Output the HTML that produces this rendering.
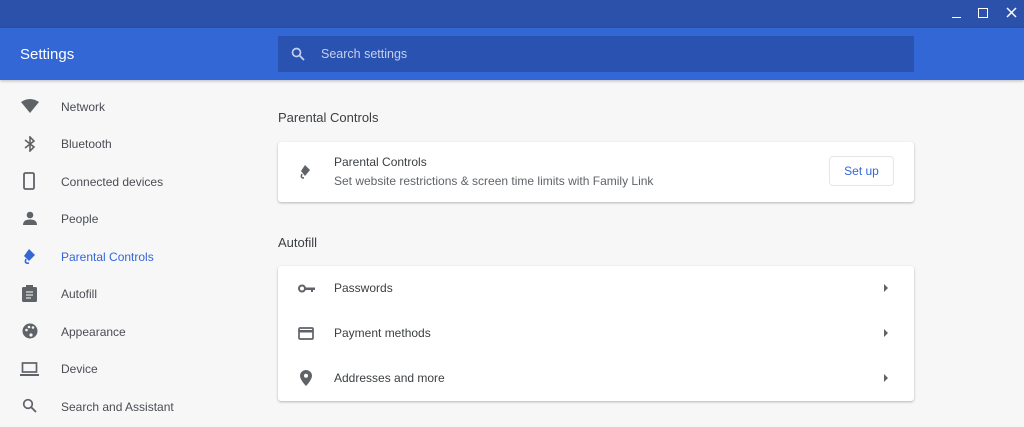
<!DOCTYPE html>
<html><head><style>
body{margin:0;width:1024px;height:427px;overflow:hidden;background:#f7f7f8;font-family:"Liberation Sans",sans-serif;position:relative}
.tb{position:absolute;left:0;top:0;width:1024px;height:28px;background:#2b51aa}
.hd{position:absolute;left:0;top:28px;width:1024px;height:52px;background:#3367d6;box-shadow:0 1px 3px rgba(0,0,0,.25)}
.hd .t{position:absolute;left:20px;top:18px;color:#fff;font-size:15px}
.sb{position:absolute;left:278px;top:8px;width:636px;height:36px;background:#2a52b0}
.sb span{position:absolute;left:43px;top:11px;color:#c5d0ee;font-size:12.5px}
.ni{position:absolute;left:61px;font-size:12px;color:#4a4d52}
.ic{position:absolute;left:21px}
.h{position:absolute;left:278px;font-size:13px;color:#3c4043}
.card{position:absolute;left:278px;width:636px;background:#fff;border-radius:3px;box-shadow:0 1px 2px rgba(0,0,0,.18),0 1px 3px rgba(0,0,0,.1)}
.rt{position:absolute;left:56px;font-size:12px;color:#3c4043}
.arr{position:absolute;left:606px;width:0;height:0;border-left:4px solid #5f6368;border-top:4px solid transparent;border-bottom:4px solid transparent}
</style></head><body>
<div class="tb">
<div style="position:absolute;left:952px;top:17px;width:9px;height:1px;background:#fff"></div>
<div style="position:absolute;left:978px;top:8px;width:8px;height:8px;border:1.5px solid #fff"></div>
<svg style="position:absolute;left:1006px;top:7px" width="11" height="11"><path d="M1 1L10 10M10 1L1 10" stroke="#fff" stroke-width="1.5"/></svg>
</div>
<div class="hd"><div class="t">Settings</div>
<div class="sb"><svg style="position:absolute;left:13px;top:11px" width="14" height="14"><circle cx="5.5" cy="5.5" r="4" fill="none" stroke="#c5d0ee" stroke-width="1.7"/><path d="M8.5 8.5L13 13" stroke="#c5d0ee" stroke-width="1.8"/></svg><span>Search settings</span></div></div>

<svg class="ic" style="top:99px" width="18" height="14"><path d="M0 3Q9 -3 18 3L9 14Z" fill="#5f6368"/></svg>
<div class="ni" style="top:100px">Network</div>
<svg class="ic" style="top:136px;left:24px" width="12" height="16"><path d="M1 4L10 11L6 15V1L10 5L1 12" fill="none" stroke="#5f6368" stroke-width="1.6"/></svg>
<div class="ni" style="top:137px">Bluetooth</div>
<svg class="ic" style="top:172px;left:23px" width="12" height="18"><rect x="1" y="1" width="10" height="16" rx="1.5" fill="none" stroke="#5f6368" stroke-width="1.8"/></svg>
<div class="ni" style="top:175px">Connected devices</div>
<svg class="ic" style="top:211px;left:23px" width="14" height="14"><circle cx="7" cy="4" r="3.3" fill="#5f6368"/><path d="M0 14Q0 8.5 7 8.5Q14 8.5 14 14Z" fill="#5f6368"/></svg>
<div class="ni" style="top:212px">People</div>
<svg class="ic" style="top:248px;left:22px" width="14" height="18"><path d="M7 1L13 7L7 13L2 8Z" fill="#3367d6"/><path d="M4 11Q2 16 7 15" fill="none" stroke="#3367d6" stroke-width="1.6"/></svg>
<div class="ni" style="top:250px;color:#3367d6">Parental Controls</div>
<svg class="ic" style="top:285px;left:22px" width="15" height="17"><rect x="0" y="2" width="15" height="15" rx="1.5" fill="#5f6368"/><rect x="4" y="0" width="7" height="4" fill="#5f6368"/><path d="M4 7h7M4 10h7M4 13h5" stroke="#fff" stroke-width="1"/></svg>
<div class="ni" style="top:287px">Autofill</div>
<svg class="ic" style="top:323px;left:22px" width="16" height="16"><circle cx="8" cy="8" r="7.5" fill="#5f6368"/><circle cx="4.5" cy="7" r="1.3" fill="#f6f6f7"/><circle cx="7" cy="4" r="1.3" fill="#f6f6f7"/><circle cx="11" cy="4.5" r="1.3" fill="#f6f6f7"/><circle cx="9" cy="12" r="1.6" fill="#f6f6f7"/></svg>
<div class="ni" style="top:325px">Appearance</div>
<svg class="ic" style="top:362px;left:20px" width="19" height="14"><rect x="2.5" y="1" width="14" height="9" fill="none" stroke="#5f6368" stroke-width="1.7"/><rect x="0" y="12" width="19" height="2" fill="#5f6368"/></svg>
<div class="ni" style="top:362px">Device</div>
<svg class="ic" style="top:398px;left:22px" width="15" height="15"><circle cx="6" cy="6" r="4.3" fill="none" stroke="#5f6368" stroke-width="1.7"/><path d="M9 9L14 14" stroke="#5f6368" stroke-width="1.9"/></svg>
<div class="ni" style="top:400px">Search and Assistant</div>

<div class="h" style="top:110px">Parental Controls</div>
<div class="card" style="top:142px;height:60px">
<svg style="position:absolute;left:21px;top:22px" width="12" height="16"><path d="M6 1L11 6L6 12L2 7Z" fill="#5f6368"/><path d="M3 10Q1 14 5 14" fill="none" stroke="#5f6368" stroke-width="1.5"/></svg>
<div class="rt" style="top:13px">Parental Controls</div>
<div class="rt" style="top:32px;color:#5f6368">Set website restrictions &amp; screen time limits with Family Link</div>
<div style="position:absolute;left:551px;top:14px;width:65px;height:30px;border:1px solid #e6e6e9;border-radius:4px;box-sizing:border-box;color:#3367d6;font-size:12px;text-align:center;line-height:28px">Set up</div>
</div>
<div class="h" style="top:235px">Autofill</div>
<div class="card" style="top:266px;height:135px">
<svg style="position:absolute;left:20px;top:18px" width="17" height="9"><circle cx="4" cy="4.5" r="3" fill="none" stroke="#5f6368" stroke-width="2"/><path d="M7 3.5h10v2.5h-2v2h-2v-2h-6z" fill="#5f6368"/></svg>
<div class="rt" style="top:15px">Passwords</div><div class="arr" style="top:18px"></div>
<svg style="position:absolute;left:20px;top:61px" width="16" height="13"><rect x="1" y="1" width="14" height="11" rx="1" fill="none" stroke="#5f6368" stroke-width="1.7"/><rect x="1" y="3" width="14" height="2.5" fill="#5f6368"/></svg>
<div class="rt" style="top:60px">Payment methods</div><div class="arr" style="top:63px"></div>
<svg style="position:absolute;left:22px;top:104px" width="12" height="16"><path d="M6 0C2.7 0 0 2.6 0 5.8C0 10 6 16 6 16S12 10 12 5.8C12 2.6 9.3 0 6 0Z" fill="#5f6368"/><circle cx="6" cy="5.8" r="2" fill="#fff"/></svg>
<div class="rt" style="top:105px">Addresses and more</div><div class="arr" style="top:108px"></div>
</div>
</body></html>
